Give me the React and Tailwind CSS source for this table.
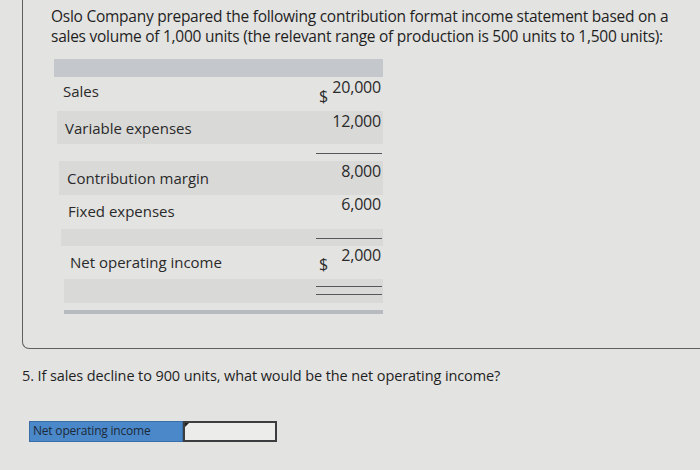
import React from 'react';

const font = { fontFamily: '"Open Sans", "Liberation Sans", sans-serif' };

const Row = ({ className = '', label, labelClass = '', children }) => (
    <div className={`flex ${className}`}>
        <div className={`flex-1 flex items-center text-[15px] text-[#2a2a2a] ${labelClass}`}>{label}</div>
        <div className="w-[67px] flex flex-col">{children}</div>
    </div>
);

const Amount = ({ value, dollar, pt = 'pt-0' }) => (
    <div className={`flex justify-between items-start pr-[2px] text-[16px] leading-[20px] text-[#2a2a2a] ${pt}`}>
        <span className={dollar ? 'mt-[9px] pl-[3px]' : 'invisible'}>$</span>
        <span className="tracking-[-0.2px]">{value}</span>
    </div>
);

const Rule = ({ className = '' }) => <div className={`h-px bg-[#55575a] mr-[1px] ${className}`} />;

const App = () => {
    return (
        <div className="w-[700px] h-[470px] bg-[#e3e3e1] overflow-hidden" style={font}>
            <div className="ml-[22px] h-[349px] border-l border-b border-[#5f6062] rounded-bl-[7px]">
                <p className="pl-[28px] pt-[6px] text-[15.5px] leading-[20px] text-[#1f1f1f] tracking-[-0.26px]">
                    Oslo Company prepared the following contribution format income statement based on a
                    <br />
                    sales volume of 1,000 units (the relevant range of production is 500 units to 1,500 units):
                </p>

                <div className="mt-[13px] w-[329px] ml-[31px]">
                    <div className="h-[18px] bg-[#c4c7cb]" />

                    <Row className="h-[34px]" label="Sales" labelClass="pl-[9px] pb-[6px]">
                        <Amount value="20,000" dollar />
                    </Row>

                    <Row className="h-[33px] bg-[#d9d9d8] ml-[3px]" label="Variable expenses" labelClass="pl-[8px] pt-[1px]">
                        <Amount value="12,000" />
                    </Row>

                    <Row className="h-[17px] ml-[3px]" label="">
                        <Rule className="mt-[9px]" />
                    </Row>

                    <Row className="h-[34px] bg-[#d9d9d8] ml-[5px]" label="Contribution margin" labelClass="pl-[8px]">
                        <Amount value="8,000" />
                    </Row>

                    <Row className="h-[34px] ml-[6px]" label="Fixed expenses" labelClass="pl-[8px] pb-[1px]">
                        <Amount value="6,000" pt="-mt-[1px]" />
                    </Row>

                    <Row className="h-[17px] bg-[#d9d9d8] ml-[7px]" label="">
                        <Rule className="mt-[9px]" />
                    </Row>

                    <Row className="h-[33px] ml-[8px]" label="Net operating income" labelClass="pl-[8px]">
                        <Amount value="2,000" dollar pt="-mt-[1px]" />
                    </Row>

                    <Row className="h-[24px] bg-[#d9d9d8] ml-[10px]" label="">
                        <Rule className="mt-[7px]" />
                        <Rule className="mt-[7px]" />
                    </Row>

                    <div className="mt-[7px] ml-[10px] h-[4px] bg-[#b7babe]" />
                </div>
            </div>

            <p className="mt-[16px] ml-[22px] text-[14.5px] text-[#1f1f1f] tracking-[-0.1px]">
                5. If sales decline to 900 units, what would be the net operating income?
            </p>

            <div className="mt-[34px] ml-[29px] flex h-[21px]">
                <div className="w-[154px] bg-[#4b88c9] border border-[#3a6ea8] flex items-center pl-[3px] text-[12px] text-[#1c2a3a] tracking-[-0.2px]">
                    Net operating income
                </div>
                <div className="relative w-[94px] bg-[#ececea] border-2 border-[#3c3d3f]">
                    <div className="absolute left-0 top-0 w-0 h-0 border-t-[4px] border-r-[4px] border-t-[#222] border-r-transparent" />
                </div>
            </div>
        </div>
    );
};

export default App;
